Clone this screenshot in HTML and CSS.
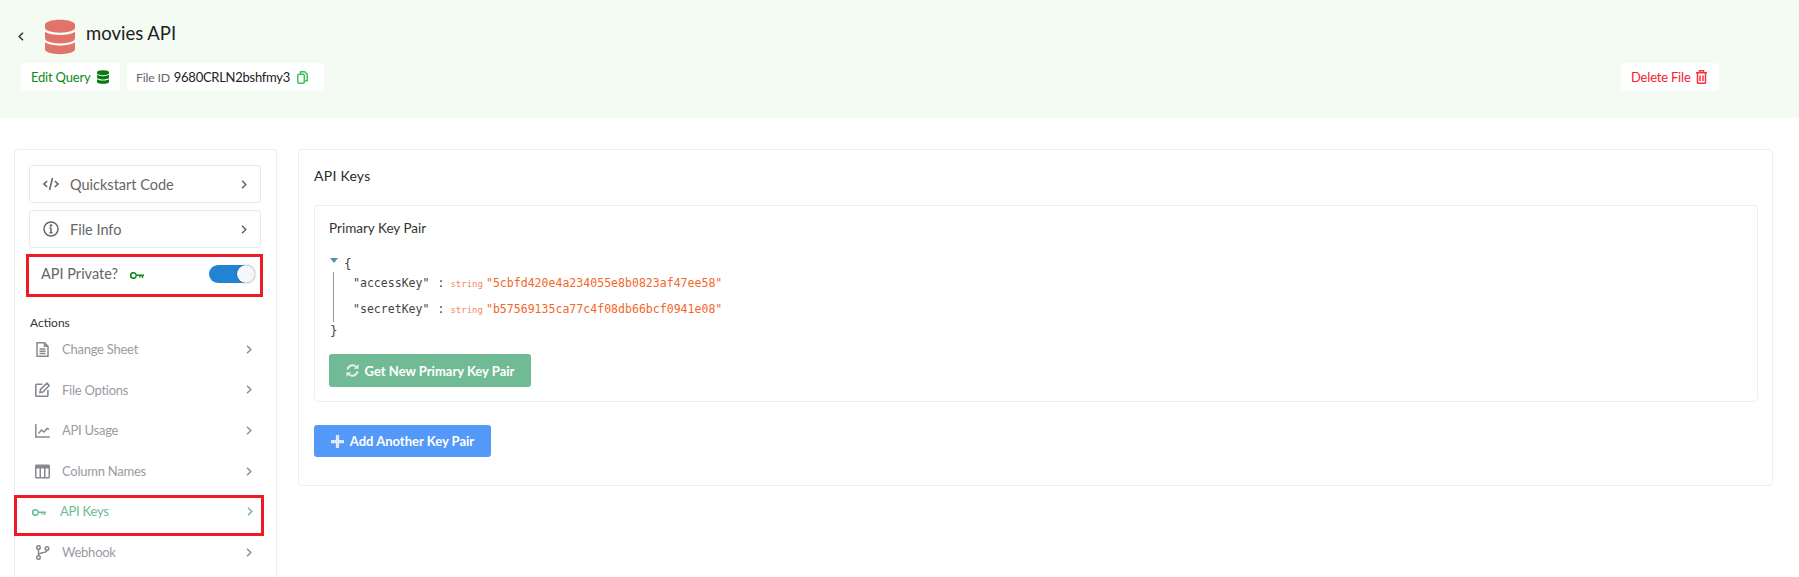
FILE: index.html
```html
<!DOCTYPE html>
<html lang="en">
<head>
<meta charset="utf-8">
<title>movies API</title>
<link rel="stylesheet" href="styles.css">
</head>
<body>
<svg class="defs" width="0" height="0" aria-hidden="true">
  <defs>
    <symbol id="db" viewBox="0 0 448 512"><path d="M448 73v46c0 40-100 73-224 73S0 159 0 119V73C0 33 100 0 224 0s224 33 224 73zm0 103v103c0 40-100 73-224 73S0 319 0 279V176c48 33 136 49 224 49s176-16 224-49zm0 160v103c0 40-100 73-224 73S0 479 0 439V336c48 33 136 49 224 49s176-16 224-49z"/></symbol>
    <symbol id="key" viewBox="0 0 14 7"><path fill-rule="evenodd" d="M3.500 0a3.500 3.500 0 0 1 3.300 2.400H14v1.500h-.8V6h-1.500V3.900h-1V5.500H9.200V3.900H6.800A3.500 3.500 0 1 1 3.500 0zm0 1.500a2 2 0 1 0 0 4 2 2 0 0 0 0-4z"/></symbol>
    <symbol id="chev" viewBox="0 0 6 9"><path d="M1 .8L4.800 4.500 1 8.200" fill="none" stroke="currentColor" stroke-width="1.500"/></symbol>
  </defs>
</svg>
<header class="top">
  <div class="title-row">
    <svg class="back" viewBox="0 0 6 9"><path d="M5 .8L1.200 4.500 5 8.200" fill="none" stroke="currentColor" stroke-width="1.500"/></svg>
    <svg class="logo"><use href="#db"/></svg>
    <h1 class="title">movies API</h1>
  </div>
  <div class="chip-row">
    <a class="chip chip-edit">Edit Query <svg class="chip-ico"><use href="#db"/></svg></a>
    <span class="chip chip-id">File ID <b class="file-id">9680CRLN2bshfmy3</b>
      <svg class="copy" viewBox="0 0 11 13" fill="none" stroke="#3cc35f" stroke-width="1.500"><rect x=".8" y="3.200" width="6.500" height="9" rx="1"/><path d="M3.500 3V.8h4.200l2.500 2.500v6.400H7.500"/></svg>
    </span>
    <a class="chip chip-del">Delete File
      <svg class="trash" viewBox="0 0 11 14" fill="none" stroke="#f8303c" stroke-width="1.500"><path d="M0 2.800h11M3.500 2.500V.8h4v1.700M1.500 3v9.600c0 .4.300.7.700.7h6.600c.4 0 .7-.3.700-.7V3M4 5.500v5.500M7 5.500v5.500"/></svg>
    </a>
  </div>
</header>
<main class="page">
  <aside class="side">
    <a class="box-item">
      <svg class="box-ico" viewBox="0 0 16 14" fill="none" stroke="#666" stroke-width="1.600"><path d="M4.200 4L1 7l3.200 3M11.800 4L15 7l-3.200 3M9.500 1l-3 12"/></svg>
      <span class="box-text">Quickstart Code</span>
      <svg class="chev"><use href="#chev"/></svg>
    </a>
    <a class="box-item">
      <svg class="box-ico" viewBox="0 0 16 16" fill="none" stroke="#666" stroke-width="1.500"><circle cx="8" cy="8" r="7"/><path d="M8 7v4.500M6.500 11.800h3M6.500 7H8"/><circle cx="8" cy="4.500" r=".6" fill="#666"/></svg>
      <span class="box-text">File Info</span>
      <svg class="chev"><use href="#chev"/></svg>
    </a>
    <div class="private">
      <span class="private-text">API Private?</span>
      <svg class="private-key"><use href="#key"/></svg>
      <span class="toggle"><span class="knob"></span></span>
    </div>
    <h2 class="actions">Actions</h2>
    <nav class="menu">
      <a class="menu-item">
        <svg class="menu-ico" viewBox="0 0 15 15" fill="none" stroke="currentColor" stroke-width="1.500"><path d="M2 .8h7.500L13 4.300v9.900H2zM9.500 .8v3.500H13M4.500 7h6M4.500 9.300h6M4.500 11.600h6"/></svg>
        <span class="menu-text">Change Sheet</span><svg class="chev"><use href="#chev"/></svg>
      </a>
      <a class="menu-item">
        <svg class="menu-ico" viewBox="0 0 15 15" fill="none" stroke="currentColor" stroke-width="1.600"><path d="M7.500 2.300H2C1.300 2.300.8 2.800.8 3.500v9.700c0 .7.500 1.200 1.200 1.200h9.700c.7 0 1.200-.5 1.200-1.200V8M5.500 7.500l-.5 3 3-.5L14.200 3.500 12 1.200z"/></svg>
        <span class="menu-text">File Options</span><svg class="chev"><use href="#chev"/></svg>
      </a>
      <a class="menu-item">
        <svg class="menu-ico" viewBox="0 0 15 15" fill="none" stroke="currentColor" stroke-width="1.500"><path d="M.8 1v13h14M3.500 10.500l3-3.500 2.500 2 3-3.500 2 1"/></svg>
        <span class="menu-text">API Usage</span><svg class="chev"><use href="#chev"/></svg>
      </a>
      <a class="menu-item">
        <svg class="menu-ico" viewBox="0 0 15 14"><path fill="currentColor" fill-rule="evenodd" d="M0 1.500C0 .7.700 0 1.500 0h12c.8 0 1.500.7 1.500 1.500v11c0 .8-.7 1.500-1.500 1.500h-12C.7 14 0 13.300 0 12.500zM1.500 4v8.500h3V4zm4.500 0v8.500h3V4zm4.500 0v8.500h3V4z"/></svg>
        <span class="menu-text">Column Names</span><svg class="chev"><use href="#chev"/></svg>
      </a>
      <a class="menu-item is-active">
        <svg class="active-key"><use href="#key"/></svg>
        <span class="menu-text">API Keys</span><svg class="chev"><use href="#chev"/></svg>
      </a>
      <a class="menu-item">
        <svg class="menu-ico" viewBox="0 0 15 15" fill="none" stroke="currentColor" stroke-width="1.500"><circle cx="3.500" cy="2.500" r="1.800"/><circle cx="3.500" cy="12.500" r="1.800"/><circle cx="12" cy="3.500" r="1.800"/><path d="M3.500 4.500v6M3.500 10c0-3 8.500-1.500 8.500-4.800"/></svg>
        <span class="menu-text">Webhook</span><svg class="chev"><use href="#chev"/></svg>
      </a>
    </nav>
  </aside>
  <section class="panel">
    <h2 class="panel-title">API Keys</h2>
    <div class="pair">
      <h3 class="pair-title">Primary Key Pair</h3>
      <div class="json">
        <div class="json-line"><span class="caret"></span><span class="brace">{</span></div>
        <div class="json-body">
          <div class="json-row"><span class="json-key">"accessKey"</span><span class="colon">:</span><span class="json-type">string</span><span class="json-val">"5cbfd420e4a234055e8b0823af47ee58"</span></div>
          <div class="json-row"><span class="json-key">"secretKey"</span><span class="colon">:</span><span class="json-type">string</span><span class="json-val">"b57569135ca77c4f08db66bcf0941e08"</span></div>
        </div>
        <div class="json-close">}</div>
      </div>
      <button class="btn btn-green">
        <svg class="btn-ico" viewBox="0 0 14 14" fill="none" stroke="currentColor" stroke-width="2"><path d="M1.500 6A5.500 5.500 0 0 1 11 3.200M12.500 8A5.500 5.500 0 0 1 3 10.800"/><path d="M13.500 .2v5H8.500zM.5 13.800v-5h5z" fill="currentColor" stroke="none"/></svg>
        Get New Primary Key Pair
      </button>
    </div>
    <button class="btn btn-blue">
      <svg class="btn-ico" viewBox="0 0 12 12"><path fill="currentColor" d="M4.500 0h3v4.500H12v3H7.500V12h-3V7.500H0v-3h4.500z"/></svg>
      Add Another Key Pair
    </button>
  </section>
</main>
</body>
</html>
```
FILE: styles.css
```css
* { box-sizing: border-box; }
html, body { margin: 0; height: 577px; overflow: hidden; background: #fff; }
body { font-family: Lato, "Liberation Sans", sans-serif; color: #333; }
.defs { display: block; height: 0; }
a { color: inherit; text-decoration: none; }

.top { height: 118px; background: #f3fbf3; padding: 18px 80px 0 21px; }
.title-row { display: flex; align-items: center; height: 37px; }
.back { width: 6px; height: 9px; color: #333; margin-left: -3px; }
.logo { width: 30px; height: 36px; fill: #e2736a; margin-left: 21px; }
.title { margin: 0 0 8px 11px; font-size: 18.500px; font-weight: 400; color: #222; }
.chip-row { display: flex; gap: 7px; margin-top: 8px; }
.chip { display: flex; align-items: center; height: 28px; border-radius: 4px; background: #fff; font-size: 13px; letter-spacing: -.2px; padding: 0 10px; white-space: nowrap; }
.chip-edit { color: #0b8a16; width: 99px; gap: 7px; }
.chip-ico { width: 12px; height: 14px; fill: #0b7a12; }
.chip-id { color: #666; width: 197px; gap: 4px; font-size: 12.300px; padding-left: 9px; }
.file-id { font-size: 13px; font-weight: 400; color: #222; letter-spacing: -.27px; }
.copy { width: 11px; height: 13px; margin-left: 3px; }
.chip-del { margin-left: auto; color: #f8212f; width: 98px; gap: 5px; }
.trash { width: 11px; height: 14px; }

.page { display: flex; align-items: flex-start; padding: 31px 26px 0 14px; gap: 21px; }
.side { width: 263px; height: 428px; flex: none; border: 1px solid #eceef0; border-bottom: 0; border-radius: 4px 4px 0 0; padding: 15px 15px 0 14px; display: flex; flex-direction: column; }
.box-item { display: flex; align-items: center; height: 38px; border: 1px solid #e9e9e9; border-radius: 3px; margin-bottom: 7px; padding: 0 13px; color: #666; }
.box-ico { width: 16px; height: 16px; flex: none; }
.box-text { margin-left: 11px; font-size: 14.500px; flex: 1; }
.chev { width: 6px; height: 9px; flex: none; color: #666; }

.private { display: flex; align-items: center; height: 43px; margin: -1px -2px 0 -3px; border: 3px solid #ed1c24; padding: 0 5px 4px 12px; }
.private-text { font-size: 14.500px; color: #666; }
.private-key { width: 14px; height: 7px; fill: #128a1a; margin: 3px 0 0 12px; }
.toggle { margin-left: auto; width: 46px; height: 18px; border-radius: 9px; background: #2183d2; display: flex; justify-content: flex-end; }
.knob { width: 18px; height: 18px; border-radius: 50%; background: #f6f6f6; box-shadow: 0 0 2px rgba(0,0,0,.4); }

.actions { margin: 18px 0 0 1px; font-size: 12px; font-weight: 400; line-height: 15px; color: #333; }
.menu { display: flex; flex-direction: column; margin: -1px -3px 0 -15px; }
.menu-item { display: flex; align-items: center; height: 40.600px; padding: 0 12px 0 21px; color: #9a9ba3; }
.menu-ico { width: 15px; height: 15px; flex: none; color: #88898f; }
.menu-text { margin-left: 12px; font-size: 13px; letter-spacing: -.25px; flex: 1; }
.menu-item .chev { color: #8e8e94; }
.is-active { height: 41px; margin: 4px 0 -4.400px; border: 3px solid #ed1c24; color: #6dbb92; padding: 0 8px 9px 15px; }
.is-active .chev { color: #6dbb92; }
.active-key { width: 14px; height: 7px; fill: #6dbb92; flex: none; margin-top: 2px; }
.is-active .menu-text { margin-left: 14px; }

.panel { flex: 1; height: 337px; border: 1px solid #eceef0; border-radius: 4px; padding: 0 14px 0 15px; }
.panel-title { margin: 16px 0 0; font-size: 14px; line-height: 20px; color: #2a2a2a; font-weight: 400; letter-spacing: .25px; }
.pair { height: 197px; margin-top: 19px; border: 1px solid #eceef0; border-radius: 4px; padding: 13px 14px 0; }
.pair-title { margin: 0; font-size: 13.500px; line-height: 18px; font-weight: 400; color: #333; }
.json { margin-top: 17px; font-family: "DejaVu Sans Mono", monospace; font-size: 11.550px; color: #444; }
.json-line { display: flex; align-items: center; height: 18px; }
.caret { width: 0; height: 0; border: 4.500px solid transparent; border-top: 5px solid #4f93ae; border-bottom: 0; margin: -6px 6px 0 1px; }
.brace { font-size: 12.500px; }
.json-body { margin-left: 4px; border-left: 1px solid #999; padding: 4px 0 0 19px; height: 50px; }
.json-row { display: flex; align-items: baseline; height: 26px; }
.colon { margin: 0 6px 0 8px; }
.json-type { font-size: 9px; color: #ef8a55; margin-right: 3px; }
.json-val { color: #f2672a; }
.json-close { line-height: 18px; margin: 0 0 0 1px; font-size: 12.500px; }

.btn { display: flex; align-items: center; justify-content: center; gap: 6px; border: 0; border-radius: 3px; color: #fff; font: 700 13px Lato, sans-serif; padding: 0; }
.btn-ico { width: 13px; height: 13px; opacity: .8; }
.btn-green { width: 202px; height: 33px; background: #70bb95; margin-top: 14px; }
.btn-blue { width: 177px; height: 32px; background: #5599f8; margin-top: 23px; }
```
